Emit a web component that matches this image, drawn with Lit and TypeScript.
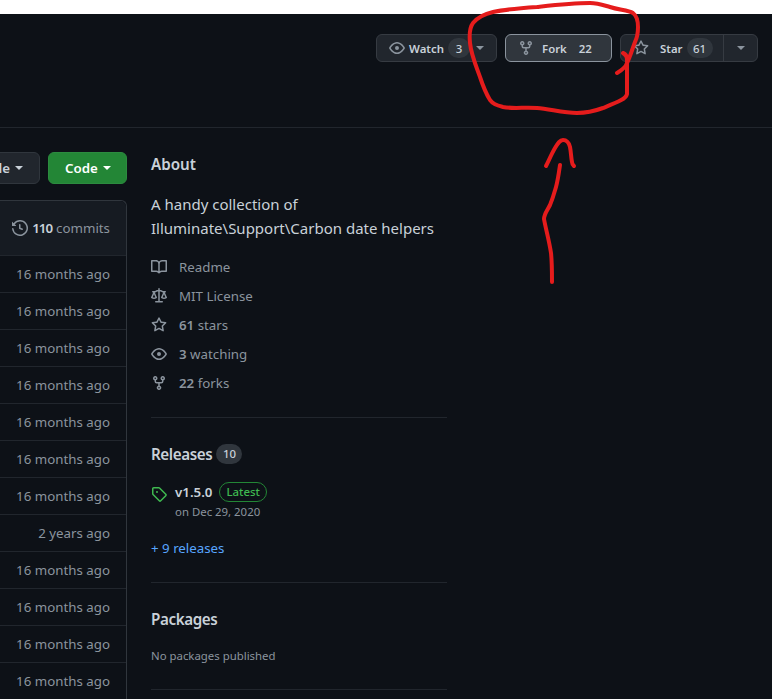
import { LitElement, html, css, svg } from "lit";
import { customElement } from "lit/decorators.js";

const P: Record<string, string> = {
  eye: "M1.679 7.932c.412-.621 1.242-1.75 2.366-2.717C5.175 4.242 6.527 3.5 8 3.5c1.473 0 2.824.742 3.955 1.715 1.124.967 1.954 2.096 2.366 2.717a.119.119 0 010 .136c-.412.621-1.242 1.75-2.366 2.717C10.825 11.758 9.473 12.5 8 12.5c-1.473 0-2.824-.742-3.955-1.715C2.92 9.818 2.09 8.69 1.679 8.068a.119.119 0 010-.136zM8 2c-1.981 0-3.67.992-4.933 2.078C1.797 5.169.88 6.423.43 7.1a1.619 1.619 0 000 1.798c.45.678 1.367 1.932 2.637 3.024C4.329 13.008 6.019 14 8 14c1.981 0 3.67-.992 4.933-2.078 1.27-1.091 2.187-2.345 2.637-3.023a1.619 1.619 0 000-1.798c-.45-.678-1.367-1.932-2.637-3.023C11.671 2.992 9.981 2 8 2zm0 8a2 2 0 100-4 2 2 0 000 4z",
  fork: "M5 3.25a.75.75 0 11-1.5 0 .75.75 0 011.5 0zm0 2.122a2.25 2.25 0 10-1.5 0v.878A2.25 2.25 0 005.75 8.5h1.5v2.128a2.251 2.251 0 101.5 0V8.5h1.5a2.25 2.25 0 002.25-2.25v-.878a2.25 2.25 0 10-1.5 0v.878a.75.75 0 01-.75.75h-4.5A.75.75 0 015 6.25v-.878zm3.75 7.378a.75.75 0 11-1.5 0 .75.75 0 011.5 0zm3-8.75a.75.75 0 100-1.5.75.75 0 000 1.5z",
  star: "M8 .25a.75.75 0 01.673.418l1.882 3.815 4.21.612a.75.75 0 01.416 1.279l-3.046 2.97.719 4.192a.75.75 0 01-1.088.791L8 12.347l-3.766 1.98a.75.75 0 01-1.088-.79l.72-4.194L.818 6.374a.75.75 0 01.416-1.28l4.21-.611L7.327.668A.75.75 0 018 .25zm0 2.445L6.615 5.5a.75.75 0 01-.564.41l-3.097.45 2.24 2.184a.75.75 0 01.216.664l-.528 3.084 2.769-1.456a.75.75 0 01.698 0l2.77 1.456-.53-3.084a.75.75 0 01.216-.664l2.24-2.183-3.096-.45a.75.75 0 01-.564-.41L8 2.694v.001z",
  book: "M0 1.75A.75.75 0 01.75 1h4.253c1.227 0 2.317.59 3 1.501A3.744 3.744 0 0111.006 1h4.245a.75.75 0 01.75.75v10.5a.75.75 0 01-.75.75h-4.507a2.25 2.25 0 00-1.591.659l-.622.621a.75.75 0 01-1.06 0l-.622-.621A2.25 2.25 0 005.258 13H.75a.75.75 0 01-.75-.75V1.75zm8.755 3a2.25 2.25 0 012.25-2.25H14.5v9h-3.757c-.71 0-1.4.201-1.992.572l.004-7.322zm-1.504 7.324l.004-5.073-.002-2.253A2.25 2.25 0 005.003 2.5H1.5v9h3.757a3.75 3.75 0 011.994.574z",
  law: "M8.75.75a.75.75 0 00-1.5 0V2h-.984c-.305 0-.604.08-.869.23l-1.288.737A.25.25 0 013.984 3H1.75a.75.75 0 000 1.5h.428L.066 9.192a.75.75 0 00.154.838l.53-.53-.53.53v.001l.002.002.002.002.006.006.016.015.045.04a3.514 3.514 0 00.686.45A4.492 4.492 0 003 11c.88 0 1.556-.22 2.023-.454a3.515 3.515 0 00.686-.45l.045-.04.016-.015.006-.006.002-.002.001-.002L5.25 9.5l.53.53a.75.75 0 00.154-.838L3.822 4.5h.162c.305 0 .604-.08.869-.23l1.289-.737a.25.25 0 01.124-.033h.984V13h-2.5a.75.75 0 000 1.5h6.5a.75.75 0 000-1.5h-2.5V3.5h.984a.25.25 0 01.124.033l1.29.736c.264.152.563.231.868.231h.162l-2.112 4.692a.75.75 0 00.154.838l.53-.53-.53.53v.001l.002.002.002.002.006.006.016.015.045.04a3.517 3.517 0 00.686.45A4.492 4.492 0 0013 11c.88 0 1.556-.22 2.023-.454a3.512 3.512 0 00.686-.45l.045-.04.01-.01.006-.005.006-.006.002-.002.001-.002-.529-.531.53.53a.75.75 0 00.154-.838L13.823 4.5h.427a.75.75 0 000-1.5h-2.234a.25.25 0 01-.124-.033l-1.29-.736A1.75 1.75 0 009.735 2H8.75V.75zM1.695 9.227c.285.135.718.273 1.305.273s1.02-.138 1.305-.273L3 6.327l-1.305 2.9zm10 0c.285.135.718.273 1.305.273s1.02-.138 1.305-.273L13 6.327l-1.305 2.9z",
  history: "M1.643 3.143L.427 1.927A.25.25 0 000 2.104V5.75c0 .138.112.25.25.25h3.646a.25.25 0 00.177-.427L2.715 4.215a6.5 6.5 0 11-1.18 4.458.75.75 0 10-1.493.154 8.001 8.001 0 101.6-5.684zM7.75 4a.75.75 0 01.75.75v2.992l2.028.812a.75.75 0 01-.557 1.392l-2.5-1A.75.75 0 017 8.25v-3.5A.75.75 0 017.75 4z",
  tag: "M2.5 7.775V2.75a.25.25 0 01.25-.25h5.025a.25.25 0 01.177.073l6.25 6.25a.25.25 0 010 .354l-5.025 5.025a.25.25 0 01-.354 0l-6.25-6.25a.25.25 0 01-.073-.177zm-1.5 0V2.75C1 1.784 1.784 1 2.75 1h5.025c.464 0 .91.184 1.238.513l6.25 6.25a1.75 1.75 0 010 2.474l-5.026 5.026a1.75 1.75 0 01-2.474 0l-6.25-6.25A1.75 1.75 0 011 7.775zM6 5a1 1 0 100 2 1 1 0 000-2z",
};

const icon = (n: string) =>
  html`<svg class="ic" viewBox="0 0 16 16" width="16" height="16"><path fill="currentColor" fill-rule="evenodd" d=${P[n]}></path></svg>`;

const times = [
  "16 months ago", "16 months ago", "16 months ago", "16 months ago", "16 months ago", "16 months ago",
  "16 months ago", "2 years ago", "16 months ago", "16 months ago", "16 months ago", "16 months ago",
];

@customElement("app-root")
export class AppRoot extends LitElement {
  static styles = css`
    :host {
      display: block;
      width: 772px;
      height: 699px;
      overflow: hidden;
      position: relative;
      background: #0d1117;
      color: #c9d1d9;
      font-family: "Noto Sans", "Open Sans", sans-serif;
      font-size: 13.3px;
    }
    .ic { display: block; flex: none; }
    .band { height: 14px; background: #fff; }
    .head {
      height: 114px;
      box-sizing: border-box;
      border-bottom: 1px solid #21262d;
      padding: 20px 14px 0 0;
      display: flex;
      justify-content: flex-end;
      align-items: flex-start;
      gap: 8px;
    }
    .btn {
      height: 28px;
      box-sizing: border-box;
      display: flex;
      align-items: center;
      background: #21262d;
      border: 1px solid #363b42;
      border-radius: 6px;
      font-size: 11.4px;
      font-weight: 600;
      color: #c9d1d9;
      white-space: nowrap;
    }
    .btn .ic { color: #8b949e; }
    .watch { width: 121px; padding-left: 12px; }
    .watch .lbl { margin-left: 4px; }
    .fork { width: 107px; padding-left: 12px; background: #30363d; border-color: #8b949e; }
    .fork .lbl { margin-left: 8px; }
    .fork .num { margin-left: 12px; }
    .star { width: 138px; padding-left: 12px; }
    .star .lbl { margin-left: 11px; }
    .count {
      display: inline-flex;
      align-items: center;
      justify-content: center;
      height: 20px;
      min-width: 22px;
      padding: 0 3px;
      box-sizing: border-box;
      border-radius: 10px;
      background: #30363d;
      font-size: 11.4px;
      font-weight: 500;
      margin-left: 4px;
    }
    .star .count { min-width: 26px; }
    .caret {
      width: 0;
      height: 0;
      border: 4px solid transparent;
      border-top-color: #8b949e;
      border-bottom: 0;
      flex: none;
    }
    .watch .caret { margin-left: 6px; }
    .star .split {
      margin-left: auto;
      align-self: stretch;
      border-left: 1px solid #363b42;
      width: 33px;
      display: flex;
      align-items: center;
      justify-content: center;
    }
    .main { display: flex; align-items: flex-start; }
    .left {
      width: 127px;
      flex: none;
      padding-top: 24px;
      overflow: hidden;
    }
    .bar { display: flex; justify-content: flex-end; gap: 8px; }
    .bar .b2 {
      height: 32px;
      box-sizing: border-box;
      padding: 0 16px;
      display: flex;
      flex: none;
      align-items: center;
      gap: 5px;
      border-radius: 6px;
      border: 1px solid #30363d;
      background: #21262d;
      font-weight: 600;
      font-size: 13.3px;
      color: #c9d1d9;
      white-space: nowrap;
    }
    .bar .b2 .caret { border-top-color: #c9d1d9; }
    .bar .b2.go {
      background: #238636;
      border-color: #2c8b3f;
      color: #fff;
      width: 79px;
      padding: 0 16px;
    }
    .bar .b2.go .caret { border-top-color: #fff; }
    .box {
      margin-top: 16px;
      margin-left: -40px;
      border: 1px solid #30363d;
      border-radius: 6px 6px 0 0;
      border-bottom: 0;
    }
    .box-h {
      height: 55px;
      box-sizing: border-box;
      background: #161b22;
      display: flex;
      align-items: center;
      justify-content: flex-end;
      padding-right: 16px;
      color: #8b949e;
      gap: 4px;
      border-bottom: 1px solid #21262d;
      border-radius: 6px 6px 0 0;
    }
    .box-h b { color: #c9d1d9; font-weight: 600; letter-spacing: -1px; }
    .box-h .ic { color: #8b949e; }
    .row {
      height: 37px;
      box-sizing: border-box;
      border-bottom: 1px solid #21262d;
      display: flex;
      align-items: center;
      justify-content: flex-end;
      padding-right: 16px;
      color: #8b949e;
    }
    .side { width: 296px; margin-left: 24px; padding-top: 24px; }
    .sec { border-bottom: 1px solid #21262d; }
    h2 {
      margin: 0;
      font-size: 15.2px;
      font-weight: 600;
      line-height: 24px;
      color: #c9d1d9;
      display: flex;
      align-items: center;
    }
    .tight { letter-spacing: -0.4px; }
    .desc { margin: 16px 0 0; font-size: 15px; line-height: 24px; color: #c9d1d9; white-space: nowrap; }
    .meta { margin-top: 12px; padding-bottom: 20px; }
    .m {
      height: 29px;
      display: flex;
      align-items: center;
      gap: 12px;
      color: #8b949e;
    }
    .m b { font-weight: 600; }
    .rel { padding: 24px 0 0; height: 165px; box-sizing: border-box; }
    .pill {
      margin-left: 4px;
      display: inline-flex;
      align-items: center;
      justify-content: center;
      min-width: 26px;
      height: 20px;
      border-radius: 10px;
      background: #30363d;
      font-size: 11.4px;
      font-weight: 500;
      letter-spacing: 0;
    }
    .r1 { display: flex; gap: 8px; margin-top: 16px; color: #3fb950; }
    .r1 .ic { margin-top: 4px; }
    .rt { line-height: 20px; }
    .rv { display: flex; align-items: center; gap: 7px; font-weight: 600; color: #c9d1d9; }
    .latest {
      height: 20px;
      box-sizing: border-box;
      display: inline-flex;
      align-items: center;
      padding: 0 6px;
      border: 1px solid #238636;
      border-radius: 10px;
      font-size: 11.4px;
      font-weight: 500;
      color: #3fb950;
    }
    .rd { font-size: 11.4px; color: #8b949e; }
    .more { margin-top: 16px; color: #58a6ff; line-height: 20px; }
    .pkg { padding-top: 24px; height: 107px; box-sizing: border-box; }
    .none { margin-top: 16px; font-size: 11.4px; line-height: 18px; color: #8b949e; }
    .ink { position: absolute; left: 0; top: 0; pointer-events: none; }
  `;

  render() {
    return html`
      <div class="band"></div>
      <div class="head">
        <div class="btn watch">${icon("eye")}<span class="lbl">Watch</span><span class="count">3</span><span class="caret"></span></div>
        <div class="btn fork">${icon("fork")}<span class="lbl">Fork</span><span class="num">22</span></div>
        <div class="btn star">${icon("star")}<span class="lbl">Star</span><span class="count">61</span><span class="split"><span class="caret"></span></span></div>
      </div>
      <div class="main">
        <div class="left">
          <div class="bar">
            <div class="b2">Add file<span class="caret"></span></div>
            <div class="b2 go">Code<span class="caret"></span></div>
          </div>
          <div class="box">
            <div class="box-h">${icon("history")}<b>110</b> commits</div>
            ${times.map((t) => html`<div class="row">${t}</div>`)}
          </div>
        </div>
        <div class="side">
          <div class="sec">
            <h2>About</h2>
            <p class="desc">A handy collection of<br />Illuminate\\Support\\Carbon date helpers</p>
            <div class="meta">
              <div class="m">${icon("book")}<span>Readme</span></div>
              <div class="m">${icon("law")}<span>MIT License</span></div>
              <div class="m">${icon("star")}<span><b>61</b> stars</span></div>
              <div class="m">${icon("eye")}<span><b>3</b> watching</span></div>
              <div class="m">${icon("fork")}<span><b>22</b> forks</span></div>
            </div>
          </div>
          <div class="sec rel">
            <h2 class="tight">Releases<span class="pill">10</span></h2>
            <div class="r1">${icon("tag")}
              <div class="rt">
                <div class="rv">v1.5.0<span class="latest">Latest</span></div>
                <div class="rd">on Dec 29, 2020</div>
              </div>
            </div>
            <div class="more">+ 9 releases</div>
          </div>
          <div class="sec pkg">
            <h2 class="tight">Packages</h2>
            <div class="none">No packages published</div>
          </div>
        </div>
      </div>
      <svg class="ink" width="772" height="699" viewBox="0 0 772 699" fill="none" stroke="#e51c1c" stroke-width="4" stroke-linecap="round" stroke-linejoin="round">
        ${svg`<path d="M617 73C622 70 626 67 627 63C628 59 626 55 623 53C626 54 627 56 627 60L627 94C626 99 618 102 603 108C592 112 584 113 577 113C563 113 550 109 537 108C525 107 513 109 503 107C496 105 493 104 490 100C485 92 483 86 480 77C476 66 471 54 470 43C469 33 470 27 473 23C478 17 484 14 493 12C507 9 522 8 537 7C555 5 572 3 590 3C598 3 603 5 610 7C619 10 628 10 633 13C637 16 638 21 638 27C638 33 637 38 635 42C632 50 630 57 627 63"></path>
        <path d="M552 282C552 270 552 262 551 253C549 240 546 230 544 219C544 214 547 211 550 205C553 198 554 194 556 187C558 180 559 172 560 165"></path>
        <path d="M546 166C549 160 552 153 555 148C558 143 560 140 563 140C567 140 569 143 570 147C571 152 571 157 572 162C572 164 573 165 574 166"></path>`}
      </svg>
    `;
  }
}
